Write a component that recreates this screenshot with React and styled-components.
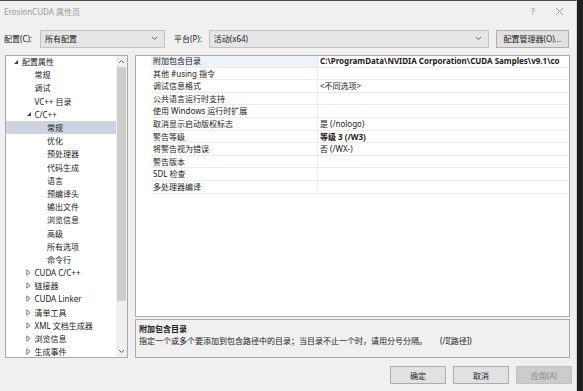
import React from "react";
import styled, { createGlobalStyle } from "styled-components";

const GlobalStyle = createGlobalStyle`
  html, body { margin: 0; padding: 0; background: #1f1f1f; }
  body {
    font-family: "Noto Sans", "Noto Sans CJK SC", sans-serif;
    font-size: 8px;
    color: #1a1a1a;
  }
  #root { width: 583px; height: 391px; overflow: hidden; }
  * { box-sizing: border-box; }
`;

const Page = styled.div`
  width: 583px;
  height: 391px;
  display: flex;
  background: #1f1f1f;
`;

const Dialog = styled.div`
  width: 577px;
  height: 391px;
  background: #f0f0f0;
  border-top: 1px solid #4a4a4a;
  border-right: 1px solid #d6d6d6;
  display: flex;
  flex-direction: column;
`;

const TitleBar = styled.div`
  height: 21px;
  display: flex;
  align-items: center;
  padding: 0 4px 0 4px;
  color: #9a9a9a;
`;

const Title = styled.div`
  flex: 1;
`;

const TitleButton = styled.div`
  width: 26px;
  display: flex;
  justify-content: center;
  align-items: center;
  color: #9a9a9a;
  font-size: 9px;
`;

const Toolbar = styled.div`
  height: 33px;
  display: flex;
  align-items: center;
  padding: 0 7px 0 4px;
`;

const Label = styled.span`
  margin-right: ${(p) => p.$mr || 8}px;
  white-space: nowrap;
`;

const Select = styled.div`
  width: ${(p) => p.$w}px;
  height: 18px;
  background: #e5e5e5;
  border: 1px solid #c3c3c3;
  display: flex;
  align-items: center;
  padding: 0 6px 0 4px;
  margin-right: ${(p) => p.$mr || 0}px;
`;

const SelectText = styled.span`
  flex: 1;
`;

const Button = styled.div`
  width: ${(p) => p.$w || 56}px;
  height: 18px;
  background: ${(p) => (p.$disabled ? "#cccccc" : "#e1e1e1")};
  border: 1px solid ${(p) => (p.$disabled ? "#bfbfbf" : "#adadad")};
  color: ${(p) => (p.$disabled ? "#838383" : "#1a1a1a")};
  display: flex;
  align-items: center;
  justify-content: center;
  white-space: nowrap;
`;

const Main = styled.div`
  display: flex;
  gap: 7px;
  padding: 0 6px 0 5px;
  height: 303px;
`;

const Tree = styled.div`
  width: 123px;
  height: 303px;
  border: 1px solid #a9a9a9;
  background: #fff;
  display: flex;
  overflow: hidden;
`;

const TreeList = styled.div`
  flex: 1;
  overflow: hidden;
  margin-top: -1px;
`;

const TreeRow = styled.div`
  height: 13.2px;
  display: flex;
  align-items: center;
  padding-left: ${(p) => 4 + p.$level * 12.5}px;
  background: ${(p) => (p.$selected ? "#cfd2e0" : "transparent")};
  white-space: nowrap;
`;

const ArrowSlot = styled.span`
  width: 12px;
  height: 13px;
  display: flex;
  align-items: center;
  justify-content: center;
`;

const ScrollBar = styled.div`
  width: 11px;
  background: #f0f0f0;
  display: flex;
  flex-direction: column;
  align-items: center;
`;

const ScrollArrow = styled.div`
  height: 11px;
  display: flex;
  align-items: center;
  justify-content: center;
`;

const ScrollTrack = styled.div`
  flex: 1;
  width: 100%;
  padding: 0 1px 45px 1px;
`;

const Thumb = styled.div`
  height: 100%;
  background: #cdcdcd;
`;

const RightCol = styled.div`
  flex: 1;
  display: flex;
  flex-direction: column;
  gap: 2px;
`;

const Grid = styled.div`
  height: 262px;
  border: 1px solid #a9a9a9;
  background: #fff;
  overflow: hidden;
`;

const GridRow = styled.div`
  display: grid;
  grid-template-columns: 15px 167px 1fr;
  height: 12.6px;
  margin-top: ${(p) => (p.$first ? -1 : 0)}px;
`;

const Gutter = styled.div``;

const Cell = styled.div`
  border-bottom: 1px solid #ececec;
  border-right: ${(p) => (p.$name ? "1px solid #ececec" : "none")};
  background: ${(p) => (p.$selected && p.$name ? "#eef2f9" : "transparent")};
  padding-left: 2px;
  line-height: 11.6px;
  font-weight: ${(p) => (p.$bold ? 700 : 400)};
  white-space: nowrap;
  overflow: hidden;
`;

const Desc = styled.div`
  height: 39px;
  border: 1px solid #a9a9a9;
  padding: 3px 3px;
  line-height: 12px;
`;

const DescTitle = styled.div`
  font-weight: 700;
`;

const DescHint = styled.span`
  margin-left: 13px;
`;

const Footer = styled.div`
  display: flex;
  justify-content: flex-end;
  gap: 7px;
  padding: 8px 4px 0 0;
`;

const Chevron = ({ down = true }) => (
  <svg width="7" height="5" viewBox="0 0 7 5">
    <polyline
      points={down ? "1,1 3.5,3.5 6,1" : "1,4 3.5,1.5 6,4"}
      fill="none"
      stroke="#606060"
      strokeWidth="1"
    />
  </svg>
);

const Arrow = ({ expanded }) =>
  expanded ? (
    <svg width="6" height="6" viewBox="0 0 6 6">
      <polygon points="5,1 5,5 1,5" fill="#404040" />
    </svg>
  ) : (
    <svg width="5" height="7" viewBox="0 0 5 7">
      <polygon points="0.8,0.8 4.2,3.5 0.8,6.2" fill="none" stroke="#707070" strokeWidth="0.9" />
    </svg>
  );

const treeItems = [
  { label: "配置属性", level: 0, arrow: "e" },
  { label: "常规", level: 1 },
  { label: "调试", level: 1 },
  { label: "VC++ 目录", level: 1 },
  { label: "C/C++", level: 1, arrow: "e" },
  { label: "常规", level: 2, selected: true },
  { label: "优化", level: 2 },
  { label: "预处理器", level: 2 },
  { label: "代码生成", level: 2 },
  { label: "语言", level: 2 },
  { label: "预编译头", level: 2 },
  { label: "输出文件", level: 2 },
  { label: "浏览信息", level: 2 },
  { label: "高级", level: 2 },
  { label: "所有选项", level: 2 },
  { label: "命令行", level: 2 },
  { label: "CUDA C/C++", level: 1, arrow: "c" },
  { label: "链接器", level: 1, arrow: "c" },
  { label: "CUDA Linker", level: 1, arrow: "c" },
  { label: "清单工具", level: 1, arrow: "c" },
  { label: "XML 文档生成器", level: 1, arrow: "c" },
  { label: "浏览信息", level: 1, arrow: "c" },
  { label: "生成事件", level: 1, arrow: "c" },
];

const props = [
  { name: "附加包含目录", value: "C:\\ProgramData\\NVIDIA Corporation\\CUDA Samples\\v9.1\\co", bold: true, selected: true },
  { name: "其他 #using 指令", value: "" },
  { name: "调试信息格式", value: "<不同选项>" },
  { name: "公共语言运行时支持", value: "" },
  { name: "使用 Windows 运行时扩展", value: "" },
  { name: "取消显示启动版权标志", value: "是 (/nologo)" },
  { name: "警告等级", value: "等级 3 (/W3)", bold: true },
  { name: "将警告视为错误", value: "否 (/WX-)" },
  { name: "警告版本", value: "" },
  { name: "SDL 检查", value: "" },
  { name: "多处理器编译", value: "" },
];

export default function App() {
  return (
    <Page>
      <GlobalStyle />
      <Dialog>
        <TitleBar>
          <Title>ErosionCUDA 属性页</Title>
          <TitleButton>?</TitleButton>
          <TitleButton>
            <svg width="9" height="9" viewBox="0 0 9 9">
              <path d="M1 1 L8 8 M8 1 L1 8" stroke="#9a9a9a" strokeWidth="0.9" />
            </svg>
          </TitleButton>
        </TitleBar>
        <Toolbar>
          <Label $mr={8}>配置(C):</Label>
          <Select $w={125} $mr={9}>
            <SelectText>所有配置</SelectText>
            <Chevron />
          </Select>
          <Label $mr={7}>平台(P):</Label>
          <Select $w={280} $mr={7}>
            <SelectText>活动(x64)</SelectText>
            <Chevron />
          </Select>
          <Button $w={73}>配置管理器(O)...</Button>
        </Toolbar>
        <Main>
          <Tree>
            <TreeList>
              {treeItems.map((it, i) => (
                <TreeRow key={i} $level={it.level} $selected={it.selected}>
                  <ArrowSlot>{it.arrow && <Arrow expanded={it.arrow === "e"} />}</ArrowSlot>
                  <span>{it.label}</span>
                </TreeRow>
              ))}
            </TreeList>
            <ScrollBar>
              <ScrollArrow>
                <Chevron down={false} />
              </ScrollArrow>
              <ScrollTrack>
                <Thumb />
              </ScrollTrack>
              <ScrollArrow>
                <Chevron />
              </ScrollArrow>
            </ScrollBar>
          </Tree>
          <RightCol>
            <Grid>
              {props.map((p, i) => (
                <GridRow key={i} $first={i === 0}>
                  <Gutter />
                  <Cell $name $selected={p.selected}>{p.name}</Cell>
                  <Cell $bold={p.bold}>{p.value}</Cell>
                </GridRow>
              ))}
            </Grid>
            <Desc>
              <DescTitle>附加包含目录</DescTitle>
              <div>
                指定一个或多个要添加到包含路径中的目录；当目录不止一个时，请用分号分隔。
                <DescHint>(/I[路径])</DescHint>
              </div>
            </Desc>
          </RightCol>
        </Main>
        <Footer>
          <Button $w={56}>确定</Button>
          <Button $w={56}>取消</Button>
          <Button $w={56} $disabled>应用(A)</Button>
        </Footer>
      </Dialog>
    </Page>
  );
}
